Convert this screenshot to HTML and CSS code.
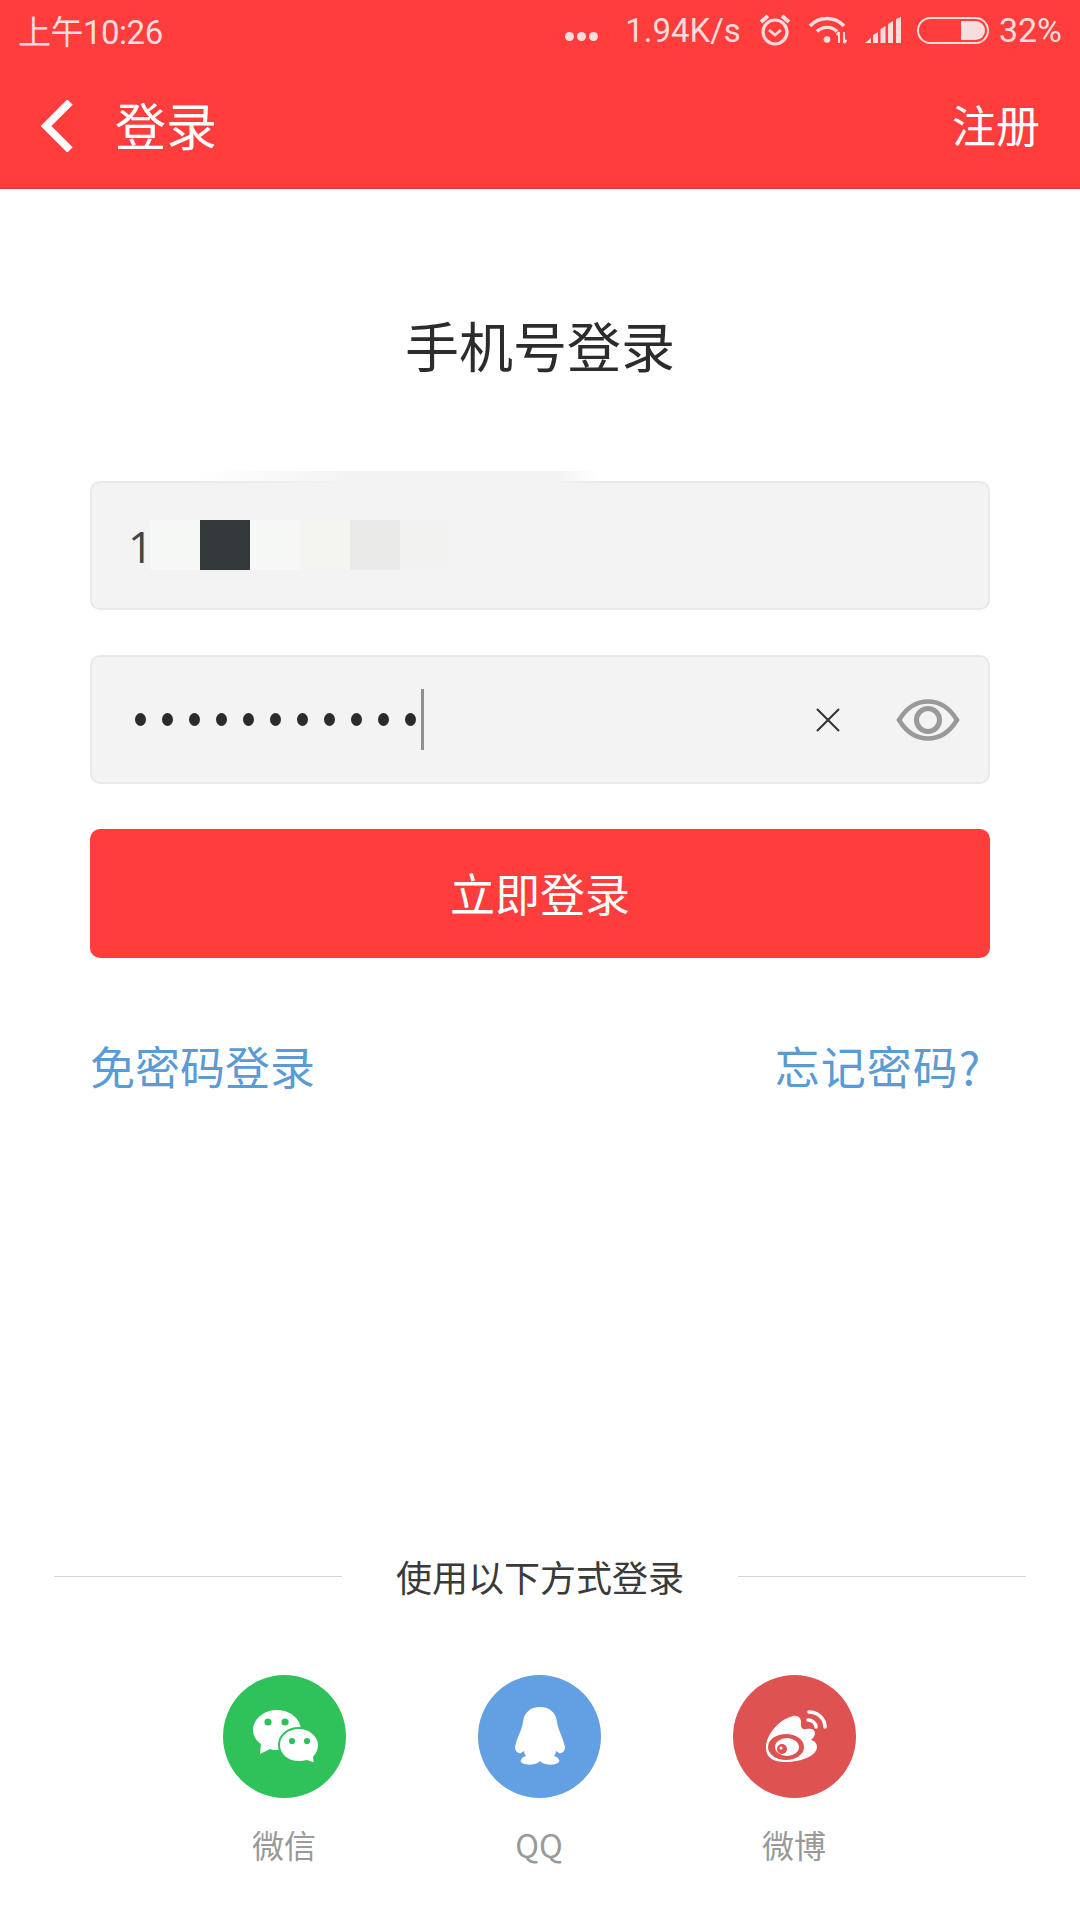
FILE: index.html
```html
<!DOCTYPE html>
<html lang="zh-CN">
<head>
    <meta charset="UTF-8">
    <meta name="viewport" content="width=device-width, initial-scale=1.0">
    <title>登录</title>
    <link rel="stylesheet" href="styles.css">
</head>
<body>
    <div class="page">
        <header class="header">
            <div class="status-bar">
                <span class="clock">上午10:26</span>
                <div class="status-right">
                    <div class="more-dots"><i></i><i></i><i></i></div>
                    <span class="speed">1.94K/s</span>
                    <svg class="ico-alarm" width="32" height="34" viewBox="0 0 32 34" fill="none" stroke="#fbdcdc">
                        <circle cx="16" cy="19" r="12" stroke-width="3.200"/>
                        <path d="M10 17l6 5 6-5" stroke-width="2.800"/>
                        <path d="M2 9l7-6M30 9l-7-6" stroke-width="4"/>
                    </svg>
                    <svg class="ico-wifi" width="40" height="28" viewBox="0 0 40 28" fill="none" stroke="#fbdcdc">
                        <path d="M2 10C11 0 27 0 36 10" stroke-width="3.600"/>
                        <path d="M9 15.500C14 10 24 10 29 15.500" stroke-width="3.400"/>
                        <circle cx="19" cy="23.500" r="3.300" fill="#fbdcdc" stroke="none"/>
                        <path d="M31 27V16M28.500 19l2.500-3M36 16v11M38.500 24l-2.500 3" stroke-width="2"/>
                    </svg>
                    <svg class="ico-signal" width="37" height="28" viewBox="0 0 37 28" fill="#fbdcdc">
                        <path d="M0 27l6-5v5zM8 19l5-3v11H8zM15.500 13l5-3v17h-5zM23 8l5-3v22h-5zM31 3l5-2v26h-5z"/>
                    </svg>
                    <div class="battery"><div class="battery-level"></div></div>
                    <span class="percent">32%</span>
                </div>
            </div>
            <div class="toolbar">
                <div class="toolbar-left">
                    <svg class="ico-back" width="34" height="52" viewBox="0 0 34 52" fill="none" stroke="#fff" stroke-width="7.500">
                        <path d="M30 2L6 26l24 24"/>
                    </svg>
                    <span class="toolbar-title">登录</span>
                </div>
                <span class="toolbar-action">注册</span>
            </div>
        </header>

        <main class="login">
            <h1>手机号登录</h1>

            <div class="field field-phone">
                <span class="smudge"></span>
                <span class="phone-digit">1</span>
                <span class="mosaic m1"></span>
                <span class="mosaic m2"></span>
                <span class="mosaic m3"></span>
                <span class="mosaic m4"></span>
                <span class="mosaic m5"></span>
                <span class="mosaic m6"></span>
            </div>

            <div class="field field-password">
                <div class="pw-dots">
                    <i></i><i></i><i></i><i></i><i></i><i></i><i></i><i></i><i></i><i></i><i></i>
                </div>
                <span class="cursor"></span>
                <svg class="ico-clear" width="24" height="24" viewBox="0 0 24 24" fill="none" stroke="#333" stroke-width="2">
                    <path d="M1 1l22 22M23 1L1 23"/>
                </svg>
                <svg class="ico-eye" width="64" height="42" viewBox="0 0 64 42" fill="none" stroke="#999">
                    <path d="M3 21C11 8 21 2.500 32 2.500S53 8 61 21c-8 13-18 18.500-29 18.500S11 34 3 21z" stroke-width="4.500"/>
                    <circle cx="32" cy="21" r="11.500" stroke-width="5"/>
                </svg>
            </div>

            <button class="login-btn">立即登录</button>

            <div class="links">
                <a>免密码登录</a>
                <a class="forgot">忘记密码?</a>
            </div>
        </main>

        <section class="others">
            <div class="others-title">
                <span class="line"></span>
                <span class="others-text">使用以下方式登录</span>
                <span class="line"></span>
            </div>
            <div class="providers">
                <div class="provider">
                    <div class="circle wechat">
                        <svg width="123" height="122" viewBox="0 0 123 122">
                            <path d="M54 35c13 0 24 9 24 20 0 11-11 20-24 20-3 0-5 0-7-1l-10 5 1-10c-5-3-8-9-8-14 0-11 11-20 24-20z" fill="#fff"/>
                            <circle cx="45" cy="47" r="3.600" fill="#2fc25a"/>
                            <circle cx="62" cy="47" r="3.600" fill="#2fc25a"/>
                            <path d="M76 53c11 0 20 8 20 17 0 5-2 9-5 12l1 7-8-3c-3 1-5 1-8 1-11 0-20-7-20-17s9-17 20-17z" fill="#fff" stroke="#2fc25a" stroke-width="2"/>
                            <circle cx="69" cy="66" r="3.100" fill="#2fc25a"/>
                            <circle cx="84" cy="66" r="3.100" fill="#2fc25a"/>
                        </svg>
                    </div>
                    <span class="provider-name">微信</span>
                </div>
                <div class="provider">
                    <div class="circle qq">
                        <svg width="123" height="122" viewBox="0 0 123 122">
                            <path d="M62 32c10 0 16 6 17 15 1 8 6 15 8 25 0 4-3 7-6 6l-3-2c0 2-1 4-2 5 4 1 6 4 5 6-2 3-13 4-18 0l-1-1-1 1c-5 4-16 3-18 0-1-2 1-5 5-6-1-1-2-3-2-5l-3 2c-3 1-6-2-6-6 2-10 7-17 8-25 1-9 7-15 17-15z" fill="#fff"/>
                        </svg>
                    </div>
                    <span class="provider-name">QQ</span>
                </div>
                <div class="provider">
                    <div class="circle weibo">
                        <svg width="123" height="122" viewBox="0 0 123 122">
                            <path d="M33 73c0-13 12-28 27-32 6-1 9 3 8 9 0 3 2 5 5 4 4-1 9 0 9 4 0 3-2 5-4 7 4 1 6 4 6 7 0 8-14 15-32 15-11 0-19-4-19-14z" fill="#fff"/>
                            <ellipse cx="53" cy="72" rx="18" ry="13" fill="#de5252"/>
                            <ellipse cx="54" cy="72" rx="12" ry="9" fill="#fff"/>
                            <circle cx="49" cy="74" r="5" fill="#de5252"/>
                            <circle cx="48" cy="73" r="1.500" fill="#fff"/>
                            <path d="M75 45c4 0 8 3 8 7M76 37c9 0 16 7 16 15" fill="none" stroke="#fff" stroke-width="3.500" stroke-linecap="round"/>
                        </svg>
                    </div>
                    <span class="provider-name">微博</span>
                </div>
            </div>
        </section>
    </div>
</body>
</html>
```

FILE: styles.css
```css
* {
    margin: 0;
    padding: 0;
    box-sizing: border-box;
}

body {
    background: #fff;
    font-family: "Noto Sans CJK SC", "Noto Sans", sans-serif;
}

.page {
    width: 1080px;
    height: 1920px;
    display: flex;
    flex-direction: column;
    overflow: hidden;
}

.header {
    height: 189px;
    background-color: #ff3d3d;
    border-bottom: 2px solid #e83a3a;
    color: #fff;
}

.status-bar {
    height: 60px;
    display: flex;
    justify-content: space-between;
    align-items: center;
    padding: 0 18px;
    color: #fbdcdc;
    font-size: 33px;
    font-family: Roboto, "Noto Sans CJK SC", sans-serif;
}

.clock {
    letter-spacing: -0.5px;
}

.status-right {
    display: flex;
    align-items: center;
}

.more-dots {
    display: flex;
    gap: 3px;
    margin-top: 12px;
    margin-right: 27px;
}

.more-dots i {
    width: 9px;
    height: 9px;
    border-radius: 50%;
    background: #fbdcdc;
}

.speed {
    margin-right: 18px;
}

.ico-alarm {
    margin-right: 17px;
}

.ico-wifi {
    margin-right: 17px;
}

.ico-signal {
    margin-right: 15px;
}

.battery {
    width: 72px;
    height: 27px;
    border: 2.5px solid #fbdcdc;
    border-radius: 14px;
    padding: 2px;
    display: flex;
    justify-content: flex-end;
    margin-right: 10px;
}

.battery-level {
    width: 24px;
    background: #fbdcdc;
    border-radius: 0 10px 10px 0;
}

.percent {
    font-size: 34px;
}

.toolbar {
    height: 127px;
    display: flex;
    justify-content: space-between;
    align-items: center;
    padding: 0 40px;
}

.toolbar-left {
    display: flex;
    align-items: center;
    gap: 41px;
}

.ico-back {
    margin-top: 4px;
}

.toolbar-title {
    font-size: 51px;
}

.toolbar-action {
    font-size: 44px;
}

.login {
    padding: 0 90px;
}

h1 {
    font-size: 54px;
    font-weight: 400;
    color: #2c2c2c;
    text-align: center;
    margin-top: 116px;
    margin-bottom: 96px;
    line-height: 80px;
}

.field {
    position: relative;
    height: 129px;
    background-color: #f3f3f3;
    border: 2px solid #e9e9e9;
    border-radius: 10px;
    display: flex;
    align-items: center;
}

.field-phone {
    padding-left: 36px;
    margin-bottom: 45px;
}

.smudge {
    position: absolute;
    left: 100px;
    right: 390px;
    top: -12px;
    height: 14px;
    background: linear-gradient(to right, #f3f3f300, #f3f3f3 40%, #f3f3f3 90%, #f3f3f300);
}

.phone-digit {
    width: 22px;
    font-family: "Open Sans", sans-serif;
    font-size: 44px;
    color: #444;
}

.mosaic {
    width: 50px;
    height: 50px;
    margin-top: -2px;
}

.m1 { background-color: #f6f8f5; }
.m2 { background-color: #343a3c; }
.m3 { background-color: #f6f8f5; }
.m4 { background-color: #f4f5f1; }
.m5 { background-color: #eaeae8; }
.m6 { background-color: #f2f2f0; }

.field-password {
    padding-left: 43px;
    margin-bottom: 45px;
}

.pw-dots {
    display: flex;
    gap: 16px;
}

.pw-dots i {
    width: 11px;
    height: 13px;
    border-radius: 50%;
    background: #2b2b2b;
}

.cursor {
    width: 3px;
    height: 61px;
    background: #8f8f8f;
    margin-left: 5px;
}

.ico-clear {
    margin-left: auto;
}

.ico-eye {
    margin-left: 56px;
    margin-right: 28px;
}

.login-btn {
    display: block;
    width: 100%;
    height: 129px;
    padding-bottom: 2px;
    background-color: #ff3d3d;
    color: #fff;
    border: none;
    border-radius: 10px;
    font-family: inherit;
    font-size: 45px;
}

.links {
    display: flex;
    justify-content: space-between;
    margin-top: 76px;
    padding-right: 9px;
    font-size: 45px;
    line-height: 64px;
    color: #5b9bd5;
}

.forgot {
    letter-spacing: 1px;
}

.others {
    margin-top: auto;
    padding: 0 54px 52px;
}

.others-title {
    display: flex;
    align-items: center;
    justify-content: space-between;
    color: #3a3a3a;
    font-size: 36px;
}

.line {
    width: 288px;
    height: 1px;
    background: #d6d6d6;
}

.providers {
    display: flex;
    justify-content: center;
    gap: 132px;
    margin-top: 73px;
    padding-right: 2px;
}

.provider {
    display: flex;
    flex-direction: column;
    align-items: center;
    gap: 22px;
}

.circle {
    width: 123px;
    height: 123px;
    border-radius: 50%;
}

.circle svg {
    display: block;
}

.wechat { background-color: #2fc25a; }
.qq { background-color: #629fe3; }
.weibo { background-color: #de5252; }

.provider-name {
    font-size: 32px;
    color: #999;
    line-height: 48px;
}
```
